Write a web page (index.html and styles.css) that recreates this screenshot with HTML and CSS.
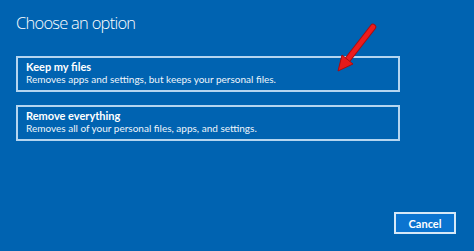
FILE: index.html
```html
<!DOCTYPE html>
<html>
<head>
<meta charset="utf-8">
<link rel="stylesheet" href="styles.css">
</head>
<body>
<div class="screen">
  <h1 class="title">Choose an option</h1>
  <div class="options">
    <div class="option">
      <div class="opt-title">Keep my files</div>
      <div class="opt-desc">Removes apps and settings, but keeps your personal files.</div>
    </div>
    <div class="option">
      <div class="opt-title">Remove everything</div>
      <div class="opt-desc">Removes all of your personal files, apps, and settings.</div>
    </div>
  </div>
  <div class="footer">
    <button class="cancel">Cancel</button>
  </div>
  <svg class="arrow" width="60" height="60" viewBox="0 0 60 60">
    <path d="M41 5 L13 41" stroke="#a80c10" stroke-width="6.5" stroke-linecap="round" fill="none"/>
    <path d="M41 5 L13 41" stroke="#ec1c1c" stroke-width="4.5" stroke-linecap="round" fill="none"/>
    <polygon points="6,49 10,33 21,42" fill="#e61a1a" stroke="#a80c10" stroke-width="1" stroke-linejoin="round"/>
  </svg>
</div>
</body>
</html>
```

FILE: styles.css
```css
html, body {
  margin: 0;
  padding: 0;
  background: #0063b1;
}
.screen {
  position: relative;
  width: 474px;
  height: 251px;
  overflow: hidden;
  background: #0063b1;
  font-family: "Open Sans", "Noto Sans", sans-serif;
  color: #ffffff;
  box-sizing: border-box;
  padding: 11px 0 0 16px;
}
.title {
  margin: 0;
  font-size: 16.5px;
  font-weight: 300;
  line-height: 24px;
  letter-spacing: -0.75px;
}
.options {
  display: flex;
  flex-direction: column;
  gap: 13px;
  margin-top: 21px;
  font-family: "Lato", "Open Sans", sans-serif;
}
.option {
  width: 384px;
  height: 36px;
  box-sizing: border-box;
  border: 2px solid #b4d5f0;
  padding: 2px 8px 0 8px;
}
.opt-title {
  font-size: 11px;
  font-weight: 700;
  line-height: 13px;
}
.opt-desc {
  font-size: 10px;
  line-height: 13px;
  color: #eef5fb;
}
.footer {
  display: flex;
  justify-content: flex-end;
  padding-right: 18px;
  margin-top: 71px;
}
.cancel {
  width: 62px;
  height: 22px;
  box-sizing: border-box;
  border: 2px solid #d6e8f7;
  background: #0b74d0;
  color: #ffffff;
  font-family: "Lato", "Open Sans", sans-serif;
  font-weight: 700;
  font-size: 11px;
  padding: 0;
}
.arrow {
  position: absolute;
  left: 332px;
  top: 22px;
}
```
